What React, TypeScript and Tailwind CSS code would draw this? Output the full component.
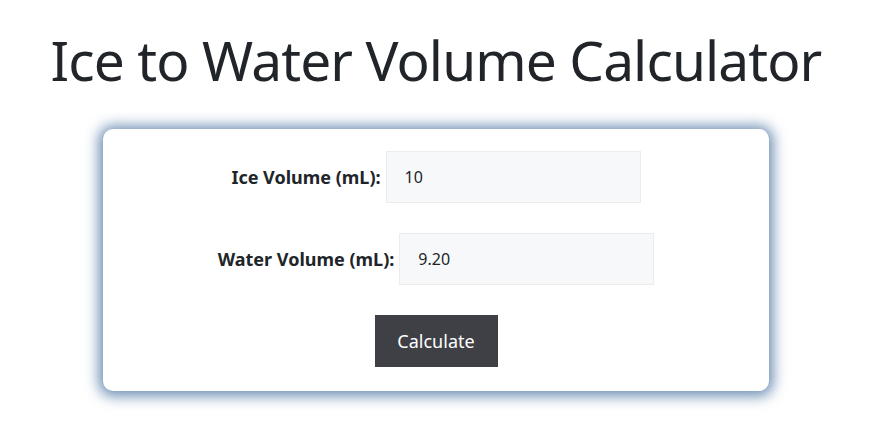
import React from "react";

export default function App() {
  return (
    <div
      className="min-h-[434px] w-[872px] bg-white flex flex-col items-center"
      style={{ fontFamily: '"Noto Sans", "Open Sans", sans-serif' }}
    >
      <h1 className="mt-[20px] text-[55px] leading-[80px] font-normal text-[#212529] tracking-[-0.9px]">
        Ice to Water Volume Calculator
      </h1>
      <div className="mt-[29px] w-[666px] h-[262px] bg-white rounded-[10px] shadow-[0_1px_14px_4px_rgba(80,120,165,0.85)] flex flex-col items-center pt-[22px]">
        <div className="flex items-center">
          <label className="text-[18px] font-bold text-[#212529] mr-[5px]">Ice Volume (mL):</label>
          <input
            readOnly
            value="10"
            className="w-[255px] h-[52px] bg-[#f7f8fa] border border-[#ececec] pl-[18px] text-[16px] text-[#212529] outline-none"
          />
        </div>
        <div className="flex items-center mt-[30px]">
          <label className="text-[18px] font-bold text-[#212529] mr-[5px]">Water Volume (mL):</label>
          <input
            readOnly
            value="9.20"
            className="w-[255px] h-[52px] bg-[#f7f8fa] border border-[#ececec] pl-[18px] text-[16px] text-[#212529] outline-none"
          />
        </div>
        <button className="mt-[30px] w-[123px] h-[52px] bg-[#3f3f46] text-white text-[18px]">
          Calculate
        </button>
      </div>
    </div>
  );
}
